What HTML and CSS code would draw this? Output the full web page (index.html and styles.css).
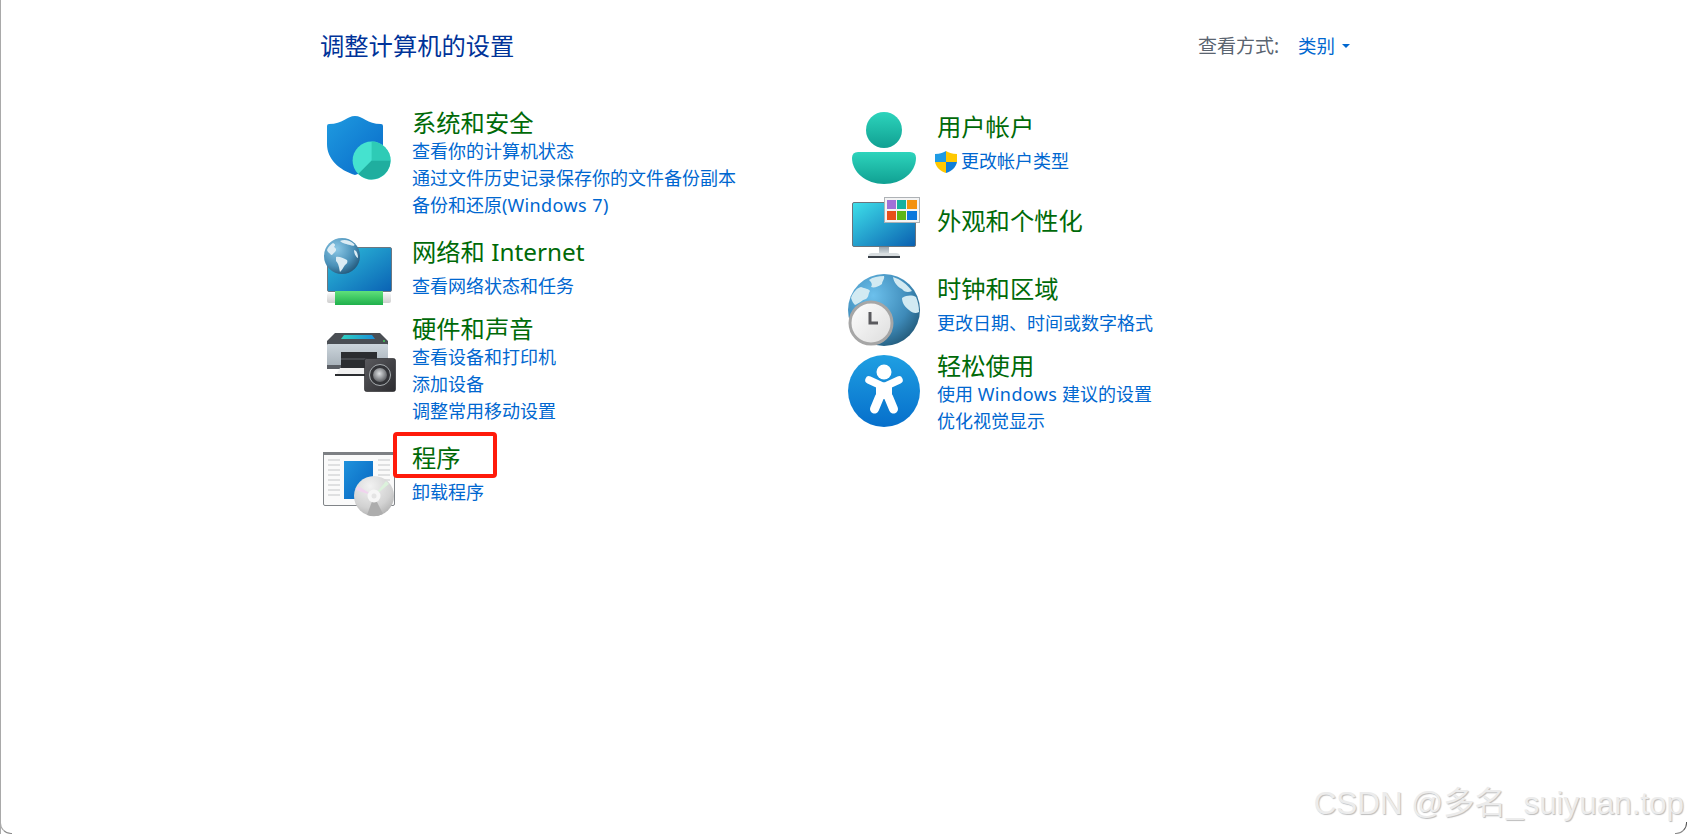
FILE: index.html
```html
<!DOCTYPE html>
<html lang="zh-CN">
<head>
<meta charset="utf-8">
<title>控制面板</title>
<link rel="stylesheet" href="styles.css">
</head>
<body>
<div class="frame">
  <header class="head">
    <h1 class="page-title">调整计算机的设置</h1>
    <div class="view">
      <span class="view-label">查看方式:</span>
      <a class="view-value">类别</a>
      <span class="caret"></span>
    </div>
  </header>

  <main class="cols">
    <section class="col col-left">
      <article class="item item-sys">
        <div class="slot">
          <svg class="ic ic-shield" viewBox="0 0 64 64">
            <defs>
              <linearGradient id="sh" x1="0" y1="0" x2="1" y2="1"><stop offset="0" stop-color="#1f9be0"/><stop offset="1" stop-color="#0869c8"/></linearGradient>
            </defs>
            <path d="M28 0C36 0 40 8 54 8Q56 8 56 10V28C56 43 44 54 28 59C12 54 0 43 0 28V10Q0 8 2 8C16 8 20 0 28 0Z" fill="url(#sh)"/>
            <circle cx="44.600" cy="44.600" r="19" fill="#45e2cf"/>
            <path d="M44.600 44.600V25.600A19 19 0 0 1 63.600 44.600Z" fill="#2ecbb6"/>
            <path d="M44.600 44.600H63.600A19 19 0 0 1 31.200 58Z" fill="#1fae9f"/>
          </svg>
        </div>
        <div class="body">
          <a class="title">系统和安全</a>
          <a class="link">查看你的计算机状态</a>
          <a class="link">通过文件历史记录保存你的文件备份副本</a>
          <a class="link">备份和还原(<span class="latin">Windows 7</span>)</a>
        </div>
      </article>

      <article class="item item-net">
        <div class="slot">
          <svg class="ic ic-net" viewBox="0 0 68 68">
            <defs>
              <linearGradient id="mon" x1="0" y1="0" x2="1" y2="1"><stop offset="0" stop-color="#2fc0dc"/><stop offset="1" stop-color="#0a62b4"/></linearGradient>
              <radialGradient id="gl" cx=".35" cy=".3" r=".8"><stop offset="0" stop-color="#8cc8e6"/><stop offset=".6" stop-color="#4a90b8"/><stop offset="1" stop-color="#1d4f70"/></radialGradient>
              <linearGradient id="gr" x1="0" y1="0" x2="0" y2="1"><stop offset="0" stop-color="#5fe07a"/><stop offset="1" stop-color="#1fb04c"/></linearGradient>
              <linearGradient id="wh" x1="0" y1="0" x2="0" y2="1"><stop offset="0" stop-color="#f6f6f6"/><stop offset="1" stop-color="#cfcfcf"/></linearGradient>
            </defs>
            <rect x="3.500" y="9.500" width="64" height="44" rx="1.500" fill="url(#mon)" stroke="#6d7780"/>
            <rect x="3" y="55" width="64" height="10" rx="2" fill="url(#wh)"/>
            <rect x="11" y="53" width="48" height="14" fill="url(#gr)"/>
            <circle cx="18" cy="18" r="18" fill="url(#gl)"/>
            <path d="M3 12C4 9 6 7 9 5C11 6 12 7 10 9C12 10 13 12 11 14C9 15 9 17 7 17C6 15 4 15 3 12ZM12 19C15 18 19 20 23 22C24 24 23 26 21 27C19 30 18 32 16 34C15 30 15 26 12 23ZM16 3C20 1 26 2 30 6C32 8 28 8 26 7C23 6 19 6 16 3ZM30 12C32 12 34 15 34 20C32 19 30 16 30 12Z" fill="#dcecf4"/>
          </svg>
        </div>
        <div class="body">
          <a class="title">网络和 Internet</a>
          <a class="link link-first">查看网络状态和任务</a>
        </div>
      </article>

      <article class="item item-hw">
        <div class="slot">
          <svg class="ic ic-printer" viewBox="0 0 69 60">
            <defs>
              <linearGradient id="pb" x1="0" y1="0" x2="0" y2="1"><stop offset="0" stop-color="#ccd5dc"/><stop offset="1" stop-color="#a4aeb6"/></linearGradient>
              <linearGradient id="sp" x1="0" y1="0" x2="1" y2="1"><stop offset="0" stop-color="#5a5a5e"/><stop offset="1" stop-color="#2c2c30"/></linearGradient>
              <radialGradient id="cone" cx=".45" cy=".4" r=".6"><stop offset="0" stop-color="#dde0e2"/><stop offset="1" stop-color="#5c5e62"/></radialGradient>
              <linearGradient id="scr" x1="0" y1="0" x2="1" y2="0"><stop offset="0" stop-color="#2fd0c0"/><stop offset="1" stop-color="#1a8fd8"/></linearGradient>
            </defs>
            <path d="M8 0H53L61 8V13H0V8Z" fill="#4a4e54"/>
            <path d="M17 2H45L48 6H14Z" fill="url(#scr)"/>
            <rect x="0" y="11" width="61" height="24" rx="1" fill="url(#pb)"/>
            <rect x="0" y="32" width="61" height="4" fill="#5a5e64"/>
            <circle cx="57" cy="8" r="1" fill="#3fd05a"/>
            <rect x="14" y="19" width="36" height="16" fill="#2b2d30"/>
            <rect x="14" y="25" width="36" height="2" fill="#45484c"/>
            <path d="M9 42L13 35H46V42Z" fill="#f0f0f0"/>
            <rect x="8" y="41" width="38" height="2" fill="#2b2d30"/>
            <rect x="37.500" y="25.500" width="31" height="33" rx="2" fill="url(#sp)" stroke="#1f1f22" stroke-width=".6"/>
            <circle cx="53" cy="42" r="10.500" fill="#333438" stroke="#a8adb0" stroke-width="1"/>
            <circle cx="53" cy="42" r="7" fill="url(#cone)"/>
          </svg>
        </div>
        <div class="body">
          <a class="title">硬件和声音</a>
          <a class="link">查看设备和打印机</a>
          <a class="link">添加设备</a>
          <a class="link">调整常用移动设置</a>
        </div>
      </article>

      <article class="item item-prog">
        <div class="slot">
          <svg class="ic ic-prog" viewBox="0 0 73 65">
            <defs>
              <linearGradient id="pr" x1="0" y1="0" x2="1" y2="1"><stop offset="0" stop-color="#1f92dc"/><stop offset="1" stop-color="#0663bf"/></linearGradient>
              <radialGradient id="dsc" cx=".4" cy=".25" r=".9"><stop offset="0" stop-color="#f2f2f2"/><stop offset=".6" stop-color="#d2d2d2"/><stop offset="1" stop-color="#a4a4a4"/></radialGradient>
            </defs>
            <rect x=".500" y=".500" width="71" height="53" rx="1.500" fill="#fafafa" stroke="#808488"/>
            <rect x="0" y="0" width="72" height="3" fill="#7d8084"/>
            <g class="prog-lines">
              <path d="M5 8H17M5 13H17M5 18H17M5 23H17M5 28H17M5 33H17M5 38H17M5 43H17M55 8H67M55 13H67M55 18H67M55 23H67M55 28H67M55 33H67"/>
            </g>
            <rect x="21" y="9" width="29" height="38" fill="url(#pr)"/>
            <circle cx="51" cy="44" r="20" fill="url(#dsc)"/>
            <path d="M51 44L33 38A19 19 0 0 1 35 34Z" fill="#f0d4ee"/>
            <path d="M51 44L63 29A20 20 0 0 1 66 32Z" fill="#dcf2dc"/>
            <path d="M51 44L44 63A20 20 0 0 0 60 62Z" fill="#adadad"/>
            <circle cx="51" cy="44" r="6.500" fill="#f6f6f6"/>
            <circle cx="51" cy="44" r="2.500" fill="#e4e4e4"/>
          </svg>
        </div>
        <div class="body">
          <a class="title title-boxed">程序</a>
          <a class="link link-first">卸载程序</a>
        </div>
        <span class="mark"></span>
      </article>
    </section>

    <section class="col col-right">
      <article class="item item-user">
        <div class="slot">
          <svg class="ic ic-user" viewBox="0 0 64 72">
            <defs>
              <linearGradient id="u1" x1="0" y1="0" x2="0" y2="1"><stop offset="0" stop-color="#2dd4bc"/><stop offset="1" stop-color="#10a092"/></linearGradient>
            </defs>
            <circle cx="32" cy="18" r="18" fill="url(#u1)"/>
            <path d="M6 40H58Q64 40 64 46C64 60 50 72 32 72C14 72 0 60 0 46Q0 40 6 40Z" fill="url(#u1)"/>
          </svg>
        </div>
        <div class="body">
          <a class="title">用户帐户</a>
          <a class="link link-first link-uac">
            <svg class="ic-uac" viewBox="0 0 22 22">
              <path d="M11 0C13 1.500 17 3 22 3V11H11Z" fill="#ffc800"/>
              <path d="M11 0C9 1.500 5 3 0 3V11H11Z" fill="#1f9be4"/>
              <path d="M0 11H11V22C5 20 1 16 0 11Z" fill="#ffc800"/>
              <path d="M22 11H11V22C17 20 21 16 22 11Z" fill="#0f7ed8"/>
            </svg>
            <span>更改帐户类型</span>
          </a>
        </div>
      </article>

      <article class="item item-look">
        <div class="slot">
          <svg class="ic ic-look" viewBox="0 0 68 61">
            <defs>
              <linearGradient id="lk" x1="0" y1="0" x2="1" y2="1"><stop offset="0" stop-color="#3ee0ea"/><stop offset="1" stop-color="#0a5fb0"/></linearGradient>
              <linearGradient id="st" x1="0" y1="0" x2="0" y2="1"><stop offset="0" stop-color="#9aa6b0"/><stop offset="1" stop-color="#cfd6da"/></linearGradient>
            </defs>
            <rect x=".500" y="5.500" width="63" height="44" rx="1.500" fill="url(#lk)" stroke="#6b747c"/>
            <rect x="27" y="50" width="10" height="6" fill="url(#st)"/>
            <path d="M16 60Q16 56 20 56H44Q48 56 48 60Z" fill="#d8dde0"/>
            <rect x="16" y="59" width="32" height="2" fill="#3a4048"/>
            <rect x="32.500" y=".500" width="35" height="25" fill="#f4f4f4" stroke="#aeb2b6"/>
            <rect x="35" y="3" width="9" height="9" fill="#a070d8"/>
            <rect x="45" y="3" width="9" height="9" fill="#17b0a0"/>
            <rect x="55" y="3" width="10" height="9" fill="#f4920e"/>
            <rect x="35" y="14" width="9" height="9" fill="#e8501a"/>
            <rect x="45" y="14" width="9" height="9" fill="#5cb516"/>
            <rect x="55" y="14" width="10" height="9" fill="#0a78dc"/>
          </svg>
        </div>
        <div class="body">
          <a class="title">外观和个性化</a>
        </div>
      </article>

      <article class="item item-clock">
        <div class="slot">
          <svg class="ic ic-clock" viewBox="0 0 72 72">
            <defs>
              <radialGradient id="gl2" cx=".35" cy=".3" r=".85"><stop offset="0" stop-color="#6cc0ec"/><stop offset=".6" stop-color="#3e8ab8"/><stop offset="1" stop-color="#1a4c68"/></radialGradient>
              <linearGradient id="face" x1="0" y1="0" x2="1" y2="1"><stop offset="0" stop-color="#ffffff"/><stop offset="1" stop-color="#dcdcdc"/></linearGradient>
            </defs>
            <circle cx="36" cy="36" r="36" fill="url(#gl2)"/>
            <path d="M3 24C5 18 9 14 13 13C17 15 20 14 22 17C20 20 21 23 18 25C14 26 12 29 7 31C5 29 4 27 3 24ZM21 6C25 3 30 2 36 2C37 5 34 7 34 10C30 13 26 14 23 13C25 10 23 8 21 6ZM45 3C52 5 59 10 64 17C60 19 56 18 54 15C50 13 46 9 45 3ZM54 24C59 21 64 21 68 23C70 28 71 32 71 38C68 40 64 39 61 36C57 33 54 29 54 24Z" fill="#d2eaf2"/>
            <circle cx="23" cy="49" r="21" fill="url(#face)" stroke="#a6a6a6" stroke-width="3"/>
            <path d="M22 38V49H30" fill="none" stroke="#5a5a5e" stroke-width="3"/>
          </svg>
        </div>
        <div class="body">
          <a class="title">时钟和区域</a>
          <a class="link link-first">更改日期、时间或数字格式</a>
        </div>
      </article>

      <article class="item item-ease">
        <div class="slot">
          <svg class="ic ic-ease" viewBox="0 0 72 72">
            <defs>
              <linearGradient id="ea" x1="0" y1="0" x2="0" y2="1"><stop offset="0" stop-color="#1f9fe2"/><stop offset="1" stop-color="#066fcb"/></linearGradient>
            </defs>
            <circle cx="36" cy="36" r="36" fill="url(#ea)"/>
            <circle cx="36" cy="17" r="7.500" fill="#fff"/>
            <path d="M21 25L34 31H38L51 25" fill="none" stroke="#fff" stroke-width="7.500" stroke-linecap="round" stroke-linejoin="round"/>
            <path d="M28 28H44V44L36 44L28 44Z" fill="#fff"/>
            <path d="M31.500 42L26.500 54M40.500 42L45.500 54" fill="none" stroke="#fff" stroke-width="9" stroke-linecap="round"/>
          </svg>
        </div>
        <div class="body">
          <a class="title">轻松使用</a>
          <a class="link"><span>使用 </span><span class="latin">Windows</span><span> 建议的设置</span></a>
          <a class="link">优化视觉显示</a>
        </div>
      </article>
    </section>
  </main>

  <div class="watermark">CSDN @多名_suiyuan.top</div>
  <span class="corner corner-l"></span>
  <span class="corner corner-r"></span>
</div>
</body>
</html>
```

FILE: styles.css
```css
* { box-sizing: border-box; }
html, body { margin: 0; padding: 0; background: #fff; }
body {
  font-family: "Noto Sans", "Noto Sans CJK SC", sans-serif;
  width: 1687px;
  height: 834px;
  overflow: hidden;
}
.frame {
  position: relative;
  width: 1687px;
  height: 834px;
  border-left: 1px solid #a9a9a9;
  padding: 30px 0 0 320px;
  overflow: hidden;
}
.head {
  display: flex;
  align-items: center;
  justify-content: space-between;
  width: 1029px;
  height: 32px;
}
.page-title {
  margin: 0 0 0 -1px;
  font-size: 24.300px;
  line-height: 32px;
  font-weight: 400;
  color: #003399;
}
.view {
  display: flex;
  align-items: center;
  line-height: 32px;
}
.view-label { color: #5a6470; margin-right: 19px; font-size: 19px; }
.view-value { color: #0067d0; font-size: 18.500px; }
.caret {
  width: 0;
  height: 0;
  margin-left: 7px;
  border-left: 4px solid transparent;
  border-right: 4px solid transparent;
  border-top: 4px solid #0067d0;
}
.cols {
  display: flex;
  margin-top: 46px;
}
.col { display: flex; flex-direction: column; }
.col-left { width: 527px; }
.col-right { width: 500px; }
.item { position: relative; display: flex; }
.slot { flex: none; width: 91px; }
.col-right .slot { width: 89px; }
.ic { display: block; }
.body { display: flex; flex-direction: column; align-items: flex-start; }
.title {
  font-size: 24.300px;
  line-height: 30px;
  color: #006a08;
  white-space: nowrap;
}
.link {
  display: block;
  font-size: 18px;
  line-height: 27px;
  color: #0067d0;
  white-space: nowrap;
}
.latin { letter-spacing: .4px; }
.link-first { margin-top: 6px; }
.link-uac { display: flex; align-items: center; gap: 4px; margin-left: -2px; }
.ic-uac { width: 22px; height: 22px; flex: none; }

.item-sys { height: 112px; }
.item-net { height: 63px; margin-top: 17px; }
.item-hw { height: 112px; margin-top: 14px; }
.item-prog { height: 63px; margin-top: 17px; }
.item-user { height: 62px; margin-top: 4px; }
.item-look { height: 30px; margin-top: 32px; }
.item-clock { height: 63px; margin-top: 38px; }
.item-ease { height: 84px; margin-top: 14px; }

.ic-shield { width: 64px; height: 64px; margin: 8px 0 0 6px; }
.ic-net { width: 68px; height: 68px; margin: 1px 0 0 3px; }
.ic-printer { width: 69px; height: 60px; margin: 19px 0 0 6px; }
.ic-prog { width: 73px; height: 65px; margin: 9px 0 0 2px; }
.ic-user { width: 64px; height: 72px; margin-left: 4px; }
.ic-look { width: 68px; height: 61px; margin: -9px 0 0 4px; }
.ic-clock { width: 72px; height: 72px; }
.ic-ease { width: 72px; height: 72px; margin-top: 4px; }

.prog-lines path { fill: none; stroke: #c4c6c8; stroke-width: 1; }

.mark {
  position: absolute;
  left: 72px;
  top: -11px;
  width: 104px;
  height: 46px;
  border: 4px solid #ff1a0a;
  border-radius: 4px;
}
.watermark {
  position: absolute;
  right: 3px;
  bottom: 12px;
  font-family: "Liberation Sans", "Noto Sans CJK SC", sans-serif;
  font-size: 31.400px;
  line-height: 36px;
  color: #ececec;
  text-shadow: 1px 1px 1px #bdbdbd;
  white-space: nowrap;
}
.corner {
  position: absolute;
  bottom: 0;
  width: 12px;
  height: 12px;
  border-bottom: 1px solid #8a8a8a;
}
.corner-l { left: -1px; border-left: 1px solid #a9a9a9; border-bottom-left-radius: 11px; }
.corner-r { right: 0; border-right: 1px solid #555; border-bottom-right-radius: 11px; }
```
